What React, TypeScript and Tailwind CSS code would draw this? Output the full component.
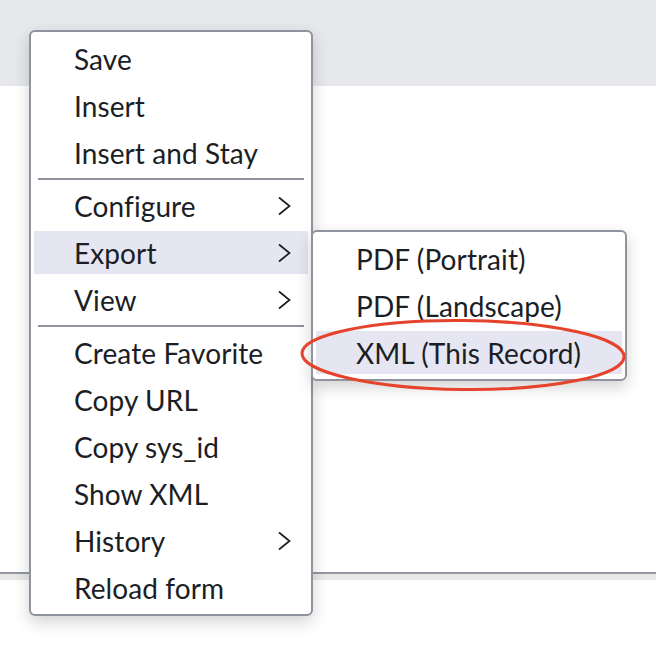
import React from "react";

type Item = { label: string; sub?: boolean; active?: boolean } | "sep";

const mainItems: Item[] = [
  { label: "Save" },
  { label: "Insert" },
  { label: "Insert and Stay" },
  "sep",
  { label: "Configure", sub: true },
  { label: "Export", sub: true, active: true },
  { label: "View", sub: true },
  "sep",
  { label: "Create Favorite" },
  { label: "Copy URL" },
  { label: "Copy sys_id" },
  { label: "Show XML" },
  { label: "History", sub: true },
  { label: "Reload form" },
];

const exportItems: Item[] = [
  { label: "PDF (Portrait)" },
  { label: "PDF (Landscape)" },
  { label: "XML (This Record)", active: true },
];

function Chevron() {
  return (
    <svg width="14" height="20" viewBox="0 0 14 20" fill="none" className="shrink-0">
      <polyline points="2,1.5 12.5,10 2,18.5" stroke="#1b1e25" strokeWidth="1.7" strokeLinejoin="miter" />
    </svg>
  );
}

function MenuRow({ item }: { item: Exclude<Item, "sep"> }) {
  return (
    <div className="h-[47px] px-[3px] py-[2px]">
      <div
        className={`flex h-full items-center justify-between pl-[40px] pr-[17px] ${
          item.active ? "bg-[#e6e6f3]" : ""
        }`}
      >
        <span className="leading-none tracking-[0.1px]">{item.label}</span>
        {item.sub && <Chevron />}
      </div>
    </div>
  );
}

function Menu({ items, className }: { items: Item[]; className: string }) {
  return (
    <div
      className={`absolute rounded-[6px] border-2 border-[#8e939d] bg-white pt-[3px] pb-[3px] shadow-[0_6px_16px_rgba(0,0,0,0.18)] ${className}`}
    >
      {items.map((item, i) =>
        item === "sep" ? (
          <div key={i} className="flex h-[6px] items-center px-[7px]">
            <div className="h-[2px] w-full bg-[#8e939d]" />
          </div>
        ) : (
          <MenuRow key={i} item={item} />
        )
      )}
    </div>
  );
}

export default function App() {
  return (
    <div
      className="relative h-[666px] w-[656px] overflow-hidden bg-white text-[28px] text-[#1b1e25]"
      style={{ fontFamily: "Lato, 'Open Sans', sans-serif" }}
    >
      <div className="h-[86px] bg-[#e7e8ec]" />
      <div className="h-[486px]" />
      <div className="h-[2px] bg-[#9398a2]" />
      <div className="h-[6px] bg-[#e8e8e8]" />

      <Menu items={mainItems} className="left-[29px] top-[30px] w-[284px]" />
      <Menu items={exportItems} className="left-[311px] top-[230px] w-[316px]" />

      <svg
        className="pointer-events-none absolute left-[298px] top-[316px]"
        width="332"
        height="80"
        viewBox="0 0 332 80"
        fill="none"
      >
        <ellipse
          cx="165"
          cy="39"
          rx="161"
          ry="34.5"
          stroke="#e5432c"
          strokeWidth="3"
          transform="rotate(0.6 165 39)"
        />
      </svg>
    </div>
  );
}
